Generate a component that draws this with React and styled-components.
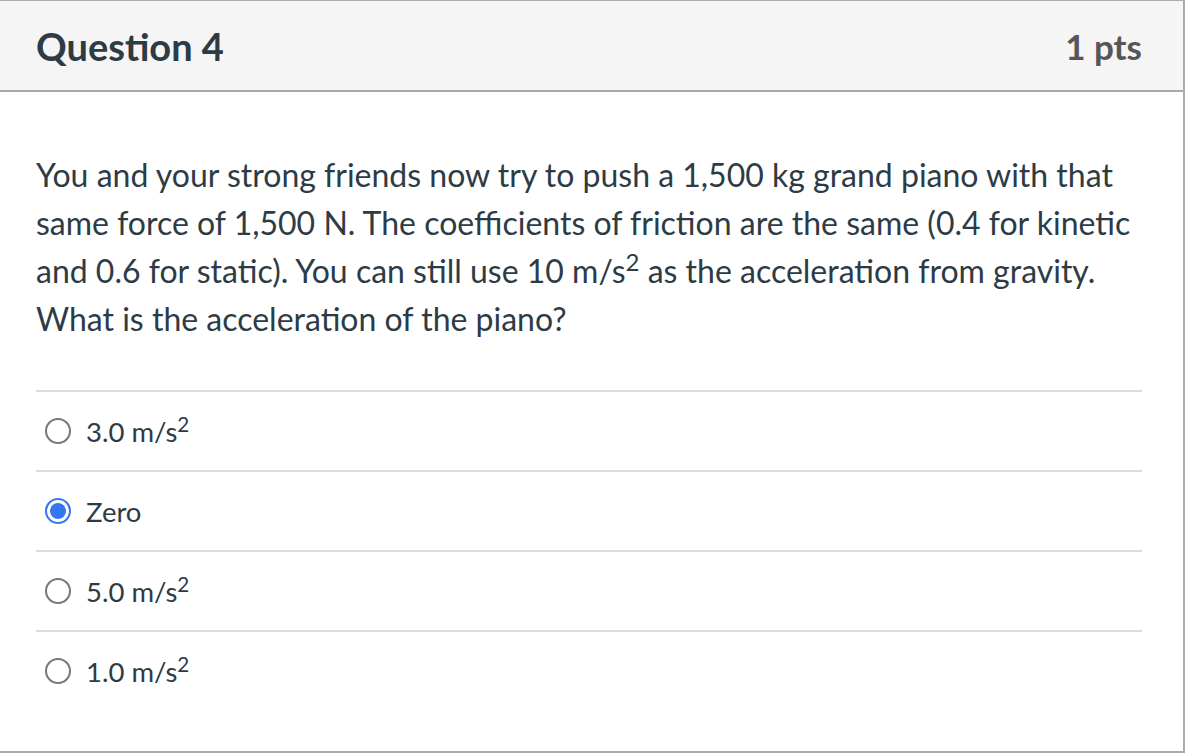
import React, { useState } from 'react';
import styled, { createGlobalStyle } from 'styled-components';

const GlobalStyle = createGlobalStyle`
  html, body {
    margin: 0;
    padding: 0;
    background: #fff;
  }
  body {
    font-family: Lato, "Liberation Sans", sans-serif;
    color: #2d3b45;
  }
`;

const Card = styled.div`
  width: 1183px;
  height: 750px;
  border-top: 1px solid #aaa;
  border-right: 2px solid #aaa;
  border-bottom: 2px solid #aaa;
  background: #fff;
  box-sizing: content-box;
`;

const Header = styled.div`
  height: 89px;
  display: flex;
  align-items: center;
  justify-content: space-between;
  padding: 0 41px 0 36px;
  background: #f5f5f5;
  border-bottom: 2px solid #aaa;
`;

const Title = styled.h2`
  margin: 0;
  font-size: 38px;
  font-weight: 700;
  color: #2d3b45;
`;

const Points = styled.div`
  font-size: 35px;
  font-weight: 700;
  color: #565656;
`;

const Body = styled.div`
  padding: 59px 41px 0 36px;
`;

const QuestionText = styled.p`
  margin: 0 0 47px;
  font-size: 32px;
  line-height: 48px;
`;

const Sup = styled.sup`
  font-size: 0.75em;
  line-height: 0;
  vertical-align: 0.5em;
`;

const Answers = styled.div`
  display: flex;
  flex-direction: column;
`;

const Answer = styled.label`
  display: flex;
  align-items: center;
  gap: 15px;
  height: 78px;
  border-top: 2px solid #dcdcdc;
  padding-left: 9px;
  font-size: 27.5px;
  cursor: pointer;
`;

const Radio = styled.span`
  width: 26px;
  height: 26px;
  box-sizing: border-box;
  border-radius: 50%;
  border: 2px solid ${p => (p.checked ? '#3577f0' : '#777')};
  display: flex;
  align-items: center;
  justify-content: center;
  flex-shrink: 0;

  &::after {
    content: '';
    width: 16px;
    height: 16px;
    border-radius: 50%;
    background: #3577f0;
    display: ${p => (p.checked ? 'block' : 'none')};
  }
`;

const options = [
  { id: 'a', text: '3.0 m/s', sup: true },
  { id: 'b', text: 'Zero', sup: false },
  { id: 'c', text: '5.0 m/s', sup: true },
  { id: 'd', text: '1.0 m/s', sup: true },
];

export default function App() {
  const [selected, setSelected] = useState('b');

  return (
    <>
      <GlobalStyle />
      <Card>
        <Header>
          <Title>Question 4</Title>
          <Points>1 pts</Points>
        </Header>
        <Body>
          <QuestionText>
            You and your strong friends now try to push a 1,500 kg grand piano with that
            same force of 1,500 N. The coefficients of friction are the same (0.4 for kinetic
            and 0.6 for static). You can still use 10 m/s<Sup>2</Sup> as the acceleration from gravity.
            What is the acceleration of the piano?
          </QuestionText>
          <Answers>
            {options.map(o => (
              <Answer key={o.id} onClick={() => setSelected(o.id)}>
                <Radio checked={selected === o.id} />
                <span>
                  {o.text}
                  {o.sup && <Sup>2</Sup>}
                </span>
              </Answer>
            ))}
          </Answers>
        </Body>
      </Card>
    </>
  );
}
